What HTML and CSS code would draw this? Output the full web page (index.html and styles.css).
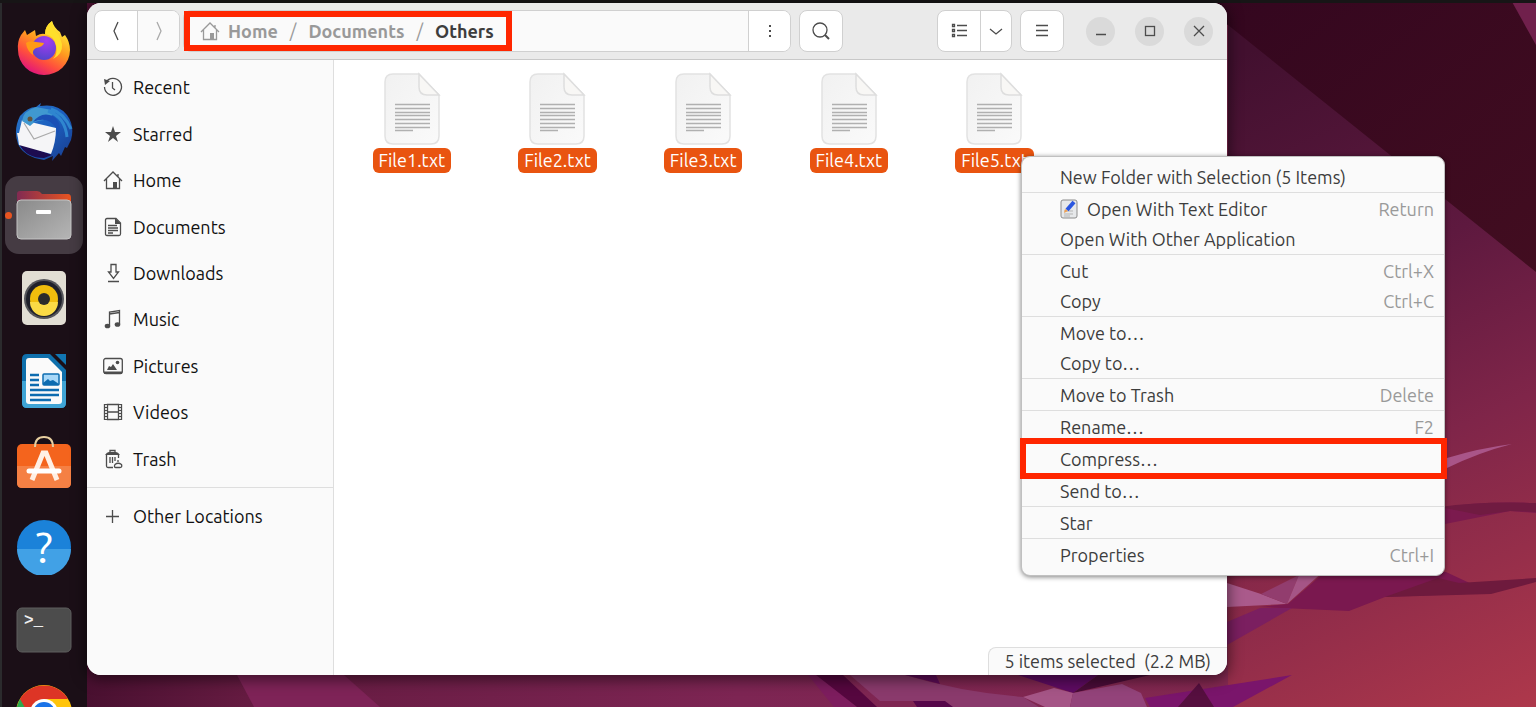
FILE: index.html
```html
<!DOCTYPE html>
<html lang="en">
<head>
    <meta charset="utf-8">
    <title>Others</title>
    <link rel="stylesheet" href="styles.css">
</head>
<body>
    <svg class="wallpaper" viewBox="0 0 1536 707" preserveAspectRatio="xMaxYMax slice" aria-hidden="true">
        <defs>
            <linearGradient id="base" gradientUnits="userSpaceOnUse" x1="1230" y1="60" x2="1536" y2="707">
                <stop offset="0" stop-color="#42102f"/>
                <stop offset="0.35" stop-color="#5e193f"/>
                <stop offset="0.6" stop-color="#7f2549"/>
                <stop offset="1" stop-color="#ae384b"/>
            </linearGradient>
            <linearGradient id="floor" x1="0" x2="1" y1="0" y2="0">
                <stop offset="0" stop-color="#3a0a27"/>
                <stop offset="0.2" stop-color="#651b41"/>
                <stop offset="0.6" stop-color="#7d2553"/>
                <stop offset="1" stop-color="#832850"/>
            </linearGradient>
            <linearGradient id="night" x1="0" x2="1" y1="0" y2="1">
                <stop offset="0" stop-color="#33061f"/>
                <stop offset="1" stop-color="#420d20"/>
            </linearGradient>
        </defs>
        <rect width="1536" height="707" fill="url(#base)"/>
        <rect width="1228" height="707" fill="url(#floor)"/>
        <path d="M1180 0H1536V272L1228 25Z" fill="url(#night)"/>
        <path d="M1511 0H1536V45Z" fill="#70204c"/>
        <path d="M237 675H344L380 707H254Z" fill="#7e2357"/>
        <path d="M808 675H818L857 707H834Z" fill="#7d1d5e"/>
        <path d="M816 675H843L877 707H857Z" fill="#56073f"/>
        <path d="M850 675H905Q960 692 1023 697L1039 707H950L940 701H880Z" fill="#8a3a6c"/>
        <path d="M905 675H936L940 684Z" fill="#5f0c58"/>
        <path d="M913 701H945L953 707H917Z" fill="#56074a"/>
        <path d="M1018 675H1098L1073 693Z" fill="#5e0b62"/>
        <path d="M1098 675H1150L1073 693Z" fill="#4a0c38"/>
        <path d="M1023 697 1054 688 1073 693 1070 707H1045Z" fill="#a55586"/>
        <path d="M1073 693 1122 684 1141 693 1147 707H1070Z" fill="#93437a"/>
        <path d="M1145 698 1292 675 1233 707H1150Z" fill="#7a156b"/>
        <path d="M1199 683 1214 707H1178Z" fill="#560f3f"/>
        <path d="M1447 458Q1480 448 1512 444 1480 452 1447 468Z" fill="#a95588"/>
        <path d="M1440 508Q1480 501 1536 503V513L1510 511 1440 525Z" fill="#7b1a4e"/>
        <path d="M1440 507Q1480 501 1536 503V512L1510 511 1480 515Z" fill="#701b41"/>
        <path d="M1227 583 1261 594 1287 604 1227 607Z" fill="#aa5a8b"/>
        <path d="M1261 594 1299 575 1287 604Z" fill="#923d6e"/>
        <path d="M1301 570H1325L1287 604Z" fill="#a55586"/>
        <path d="M1325 572H1446L1491 593 1385 597 1349 611 1259 607 1288 604Z" fill="#7a184f"/>
        <path d="M1385 597 1438 578 1459 583 1536 578V582L1491 594Z" fill="#6e1a3d"/>
        <path d="M1260 608H1292L1227 645V622Z" fill="#7b1f60"/>
    </svg>
    <div class="topbar"></div>

    <div class="screen">
        <nav class="dock" aria-label="Dock">
            <button class="dock-item" aria-label="Firefox">
                <svg width="54" height="56" viewBox="0 0 54 56">
                    <defs>
                        <linearGradient id="fox" x1="0.8" y1="0.1" x2="0.3" y2="1">
                            <stop offset="0" stop-color="#fff03a"/>
                            <stop offset="0.4" stop-color="#ff9a1f"/>
                            <stop offset="0.7" stop-color="#ff4f3d"/>
                            <stop offset="1" stop-color="#e0127f"/>
                        </linearGradient>
                        <radialGradient id="globe" cx="0.6" cy="0.2" r="0.9">
                            <stop offset="0" stop-color="#a63bf0"/>
                            <stop offset="1" stop-color="#4b45c8"/>
                        </radialGradient>
                    </defs>
                    <path d="M4 14 8 9 10 14 18 9 19 15Q24 12 28 13 28 5 35 0 37 7 43 11L45 16 48 14Q53 21 53 29A26 25 0 0 1 1 29Q0 21 4 14Z" fill="url(#fox)"/>
                    <circle cx="27" cy="27" r="12" fill="url(#globe)"/>
                    <path d="M28 13Q37 15 39 24 41 33 36 38 46 33 45 23L42 14 37 9 35 0Q28 5 28 13Z" fill="#ffdf2b"/>
                    <path d="M9 22Q12 19 19 21L27 22Q26 26 19 27 15 29 16 34 10 30 9 22Z" fill="#ff9b16"/>
                </svg>
            </button>
            <button class="dock-item" aria-label="Thunderbird">
                <svg width="60" height="60" viewBox="0 0 60 60">
                    <defs>
                        <linearGradient id="bird" x1="0" y1="0" x2="1" y2="1">
                            <stop offset="0" stop-color="#2878c8"/>
                            <stop offset="0.5" stop-color="#1c5fc0"/>
                            <stop offset="1" stop-color="#183b8c"/>
                        </linearGradient>
                    </defs>
                    <path d="M6 14Q14 5 22 5L27 1 26 4Q44 1 53 13 61 24 57 38L53 46 51 45 47 54 45 51 38 59 39 54 30 58Q10 55 4 42-1 28 6 14Z" fill="url(#bird)"/>
                    <path d="M5 42 14 44 38 53 30 56Q12 56 5 42Z" fill="#1d0c50"/>
                    <path d="M8 18 42 26Q42 40 37 52L5 43 4 36 3 31 5 31Z" fill="#f5f5f7"/>
                    <path d="M10 21 20 37 41 29" fill="none" stroke="#aaa" stroke-width="1.2"/>
                    <path d="M8 19Q9 9 22 5L43 9 33 18Q22 17 16 24Z" fill="#4098d0"/>
                    <path d="M19 20Q34 13 43 27V33Q50 22 39 14 27 9 19 20Z" fill="#1a4fb5"/>
                    <circle cx="16" cy="17" r="2.5" fill="#66543c"/>
                    <path d="M34 9Q51 15 53 35M37 7Q50 11 57 27" fill="none" stroke="#2f86cf" stroke-width="3"/>
                </svg>
            </button>
            <button class="dock-item active" aria-label="Files">
                <svg width="56" height="52" viewBox="0 0 56 52">
                    <defs>
                        <linearGradient id="tab" x1="0" x2="1" y1="0" y2="0">
                            <stop offset="0" stop-color="#812a52"/>
                            <stop offset="1" stop-color="#e95420"/>
                        </linearGradient>
                        <linearGradient id="grey" x1="0" x2="1" y1="0" y2="1">
                            <stop offset="0" stop-color="#8a8a8a"/>
                            <stop offset="1" stop-color="#b5b5b5"/>
                        </linearGradient>
                    </defs>
                    <path d="M1 20V5Q1 2 4 2H21Q24 2 26 5H52Q55 5 55 9V22Z" fill="url(#tab)"/>
                    <path d="M5 11H51Q55 11 55 15V46Q55 50 51 50H5Q1 50 1 46V15Q1 11 5 11Z" fill="url(#grey)" stroke="#c4c4c4"/>
                    <rect x="20" y="21" width="15" height="4" rx="1" fill="#fff"/>
                </svg>
            </button>
            <button class="dock-item" aria-label="Rhythmbox">
                <svg width="46" height="56" viewBox="0 0 46 56">
                    <rect x="1" y="1" width="44" height="54" rx="5" fill="#e2ded4"/>
                    <circle cx="23" cy="29" r="20" fill="#55555a"/>
                    <circle cx="23" cy="29" r="18" fill="#1f202b"/>
                    <circle cx="23" cy="29" r="14" fill="#f0bd0d"/>
                    <path d="M9 32A14 14 0 0 0 37 32Z" fill="#fada45"/>
                    <circle cx="23" cy="29" r="6" fill="#2b2b2b"/>
                </svg>
            </button>
            <button class="dock-item" aria-label="LibreOffice Writer">
                <svg width="46" height="56" viewBox="0 0 46 56">
                    <path d="M6 1H29L45 17V50Q45 55 40 55H6Q1 55 1 50V6Q1 1 6 1Z" fill="#0f70ac"/>
                    <path d="M1 28H45V50Q45 55 40 55H6Q1 55 1 50Z" fill="#3fa4d5"/>
                    <path d="M34 1H45V12Z" fill="#1176b2"/>
                    <path d="M8 5H27L41 19V48Q41 51 38 51H8Q5 51 5 48V8Q5 5 8 5Z" fill="#fafafa"/>
                    <path d="M9 22H18M9 27H18M9 32H18M9 37H38M9 42H38M9 47H30" stroke="#0d6cb0" stroke-width="2.4"/>
                    <rect x="22" y="21" width="16" height="11" rx="1" fill="#a8d8f8" stroke="#0d6cb0" stroke-width="1.5"/>
                    <path d="M22 32V30L27 26 29 28 32 27 38 31V32Z" fill="#0d6cb0"/>
                </svg>
            </button>
            <button class="dock-item" aria-label="Ubuntu Software">
                <svg width="56" height="56" viewBox="0 0 56 56">
                    <rect x="1" y="8" width="54" height="44" rx="5" fill="#f4641d"/>
                    <path d="M1 30H55V47Q55 52 50 52H6Q1 52 1 47Z" fill="#f58044"/>
                    <path d="M16 44 27 17H30L41 44" fill="none" stroke="#fff0e5" stroke-width="5"/>
                    <path d="M13 35H43" stroke="#fff" stroke-width="5" stroke-linecap="round"/>
                    <path d="M19 11Q19 1 28 1T37 11" fill="none" stroke="#e8cfa0" stroke-width="2"/>
                </svg>
            </button>
            <button class="dock-item" aria-label="Help">
                <svg width="56" height="56" viewBox="0 0 56 56">
                    <circle cx="28" cy="28" r="27" fill="#1b82d9"/>
                    <path d="M1 30A27 27 0 0 0 55 30Z" fill="#41a1e6"/>
                    <text class="help-mark" x="28" y="44" text-anchor="middle">?</text>
                </svg>
            </button>
            <button class="dock-item" aria-label="Terminal">
                <svg width="56" height="46" viewBox="0 0 56 46">
                    <rect x="1" y="1" width="54" height="44" rx="5" fill="#4c4c4c" stroke="#5e5e5e"/>
                    <text class="prompt" x="8" y="18">&gt;_</text>
                </svg>
            </button>
            <button class="dock-item" aria-label="Chrome">
                <svg width="58" height="58" viewBox="0 0 58 58">
                    <circle cx="29" cy="29" r="28" fill="#ffc40a"/>
                    <path d="M29 29 5 15A28 28 0 0 0 29 57L41 36Z" fill="#2da94f"/>
                    <path d="M5 15A28 28 0 0 1 53 15H29L17 36Z" fill="#dd3526"/>
                    <circle cx="29" cy="29" r="14" fill="#fff"/>
                    <circle cx="29" cy="29" r="11" fill="#1a73e8"/>
                </svg>
            </button>
        </nav>

        <main class="desktop">
            <div class="window">
                <header class="headerbar">
                    <div class="linked">
                        <button class="btn" aria-label="Back"><svg width="20" height="24" viewBox="0 0 20 24"><path d="M12 3 8 12 12 21"/></svg></button>
                        <button class="btn" aria-label="Forward" disabled><svg width="20" height="24" viewBox="0 0 20 24"><path d="M8 3 12 12 8 21"/></svg></button>
                    </div>
                    <div class="pathbar">
                        <nav class="crumbs" aria-label="Path">
                            <a href="#"><svg width="20" height="20" viewBox="0 0 20 20"><path d="M1 11 10 2 19 11M3.5 9V18.5H16.5V9M15 7V4"/><path class="solid" d="M10 12H14V18H10Z"/></svg>Home</a>
                            <span>/</span>
                            <a href="#">Documents</a>
                            <span>/</span>
                            <a href="#" class="current">Others</a>
                        </nav>
                        <button class="btn" aria-label="Folder menu"><svg width="20" height="20" viewBox="0 0 20 20"><path class="solid" d="M9 4H11V6H9ZM9 9H11V11H9ZM9 14H11V16H9Z"/></svg></button>
                    </div>
                    <button class="btn single" aria-label="Search"><svg width="20" height="20" viewBox="0 0 20 20"><circle cx="9" cy="9" r="7"/><path d="M14 14 18 18" stroke-width="2"/></svg></button>
                    <div class="spacer"></div>
                    <div class="linked">
                        <button class="btn" aria-label="List view"><svg width="20" height="20" viewBox="0 0 20 20"><path d="M8 4.5H18M8 9.5H18M8 14.5H18"/><path d="M3.5 3.5H5.5V5.5H3.5ZM3.5 8.5H5.5V10.5H3.5ZM3.5 13.5H5.5V15.5H3.5Z"/></svg></button>
                        <button class="btn narrow" aria-label="View options"><svg width="16" height="16" viewBox="0 0 16 16"><path d="M2 6 8 11 14 6"/></svg></button>
                    </div>
                    <button class="btn single" aria-label="Main menu"><svg width="20" height="20" viewBox="0 0 20 20"><path d="M4 4.5H16M4 9.5H16M4 14.5H16"/></svg></button>
                    <div class="controls">
                        <button aria-label="Minimize"><svg width="16" height="16" viewBox="0 0 16 16"><path d="M3 11.5H13"/></svg></button>
                        <button aria-label="Maximize"><svg width="16" height="16" viewBox="0 0 16 16"><rect x="3.5" y="3.5" width="9" height="9"/></svg></button>
                        <button aria-label="Close"><svg width="16" height="16" viewBox="0 0 16 16"><path d="M3 3 13 13M13 3 3 13"/></svg></button>
                    </div>
                </header>

                <div class="content">
                    <aside class="sidebar">
                        <ul class="places">
                            <li><a href="#"><svg width="20" height="20" viewBox="0 0 20 20"><path d="M3 5A8.5 8.5 0 1 1 1.5 10M9.5 5V11L12 13"/><path class="solid" d="M1 2 7 4 2 8Z"/></svg>Recent</a></li>
                            <li><a href="#"><svg width="20" height="20" viewBox="0 0 20 20"><path class="solid" d="M10 2 12 8H18L13 12 15 18 10 14 5 18 7 12 2 8H8Z"/></svg>Starred</a></li>
                            <li><a href="#"><svg width="20" height="20" viewBox="0 0 20 20"><path d="M1 11 10 2 19 11M3.5 9V18.5H16.5V9M15 7V4"/><path class="solid" d="M10 12H14V18H10Z"/></svg>Home</a></li>
                            <li><a href="#"><svg width="20" height="20" viewBox="0 0 20 20"><path d="M4 1.5H13L17.5 6V17Q17.5 18.5 16 18.5H4Q2.5 18.5 2.5 17V3Q2.5 1.5 4 1.5ZM5 8.5H14M5 11H15M5 13.5H15M5 16H10"/><path class="solid" d="M12 1V7H18Z"/></svg>Documents</a></li>
                            <li><a href="#"><svg width="20" height="20" viewBox="0 0 20 20"><path d="M8 1.5H13V9H15.5L10.5 15.5 5.5 9H8ZM5 18.5H16"/></svg>Downloads</a></li>
                            <li><a href="#"><svg width="20" height="20" viewBox="0 0 20 20"><path d="M6.5 16V3L16.5 1.5V15M6.5 5 16.5 3.5"/><ellipse class="solid" cx="4.5" cy="17" rx="2.8" ry="2.3"/><ellipse class="solid" cx="14.5" cy="15.5" rx="2.8" ry="2.3"/></svg>Music</a></li>
                            <li><a href="#"><svg width="20" height="20" viewBox="0 0 20 20"><rect x="0.7" y="2.5" width="18.6" height="15" rx="2"/><path class="solid" d="M1 15.5H19V18H1ZM4 14 6 10 8 11 10 8 14 14Z"/><circle class="solid" cx="14.5" cy="6.5" r="1.8"/></svg>Pictures</a></li>
                            <li><a href="#"><svg width="20" height="20" viewBox="0 0 20 20"><path d="M4.5 2.5H15.5V17.5H4.5ZM4.5 10H15.5"/><path d="M2.5 2V18M17.5 2V18" stroke-width="3" stroke-dasharray="1 2"/><path d="M1.5 2V18M18.5 2V18"/></svg>Videos</a></li>
                            <li><a href="#"><svg width="20" height="20" viewBox="0 0 20 20"><path d="M7 3V1.5H12V3M3.5 6V17Q3.5 18.5 5 18.5H10M15.5 6V9M7 8V14M9.5 8V14M12 8V12"/><path class="solid" d="M2 6Q4 3 6 3H13Q15 3 17 6Z"/><path d="M12 15.5Q15 13 18.5 15.5 19.5 18.5 17 18.5H13Q10.5 18.5 12 15.5ZM15 11V13"/></svg>Trash</a></li>
                        </ul>
                        <ul class="places other">
                            <li><a href="#"><svg width="20" height="20" viewBox="0 0 20 20"><path d="M3 10.5H16M9.5 4V17"/></svg>Other Locations</a></li>
                        </ul>
                    </aside>
                    <section class="view">
                        <ul class="files">
                            <li><svg width="58" height="74" viewBox="0 0 58 74"><use href="#paper"/></svg><span>File1.txt</span></li>
                            <li><svg width="58" height="74" viewBox="0 0 58 74"><use href="#paper"/></svg><span>File2.txt</span></li>
                            <li><svg width="58" height="74" viewBox="0 0 58 74"><use href="#paper"/></svg><span>File3.txt</span></li>
                            <li><svg width="58" height="74" viewBox="0 0 58 74"><use href="#paper"/></svg><span>File4.txt</span></li>
                            <li><svg width="58" height="74" viewBox="0 0 58 74"><use href="#paper"/></svg><span>File5.txt</span></li>
                        </ul>
                        <p class="status">5 items selected&nbsp; (2.2 MB)</p>
                    </section>
                </div>
            </div>

            <div class="menu" role="menu">
                <div class="group">
                    <button role="menuitem">New Folder with Selection (5 Items)</button>
                </div>
                <div class="group">
                    <button role="menuitem">
                        <svg width="18" height="20" viewBox="0 0 18 20"><rect x="1" y="1" width="16" height="18" rx="2" fill="#e6e8ea" stroke="#8c8c8c"/><path d="M4 15H13M4 12H13M4 17H10" stroke="#b5b5b5"/><path d="M7 11 14 3" stroke="#2a56e0" stroke-width="4"/><path d="M4 14 5 10 8 12Z" fill="#f0a050"/></svg>
                        Open With Text Editor<kbd>Return</kbd>
                    </button>
                    <button role="menuitem">Open With Other Application</button>
                </div>
                <div class="group">
                    <button role="menuitem">Cut<kbd>Ctrl+X</kbd></button>
                    <button role="menuitem">Copy<kbd>Ctrl+C</kbd></button>
                </div>
                <div class="group">
                    <button role="menuitem">Move to…</button>
                    <button role="menuitem">Copy to…</button>
                </div>
                <div class="group">
                    <button role="menuitem">Move to Trash<kbd>Delete</kbd></button>
                </div>
                <div class="group">
                    <button role="menuitem">Rename…<kbd>F2</kbd></button>
                </div>
                <div class="group">
                    <button role="menuitem" class="marked">Compress…</button>
                </div>
                <div class="group">
                    <button role="menuitem">Send to…</button>
                </div>
                <div class="group">
                    <button role="menuitem">Star</button>
                </div>
                <div class="group">
                    <button role="menuitem">Properties<kbd>Ctrl+I</kbd></button>
                </div>
            </div>
        </main>
    </div>

    <svg class="defs" width="0" height="0" aria-hidden="true">
        <defs>
            <linearGradient id="sheet" x1="0" x2="1" y1="0" y2="1">
                <stop offset="0" stop-color="#f1f1f1"/>
                <stop offset="1" stop-color="#fafafa"/>
            </linearGradient>
            <g id="paper">
                <path d="M10 2H36L56 23V64Q56 72 48 72H10Q2 72 2 64V10Q2 2 10 2Z" fill="url(#sheet)" stroke="#e2e2e2" stroke-width="1.5"/>
                <path d="M36 2V15Q36 23 44 23H56Z" fill="#f8f7f5" stroke="#dedede" stroke-width="1.5"/>
                <path d="M12 32.5H47M12 36.5H47M12 40.5H47M12 43.5H47M12 47.5H47M12 51.5H47M12 55.5H47M12 58.5H30" stroke="#b0b0b0" stroke-width="1.3"/>
            </g>
        </defs>
    </svg>
</body>
</html>
```
FILE: styles.css
```css
* {
    box-sizing: border-box;
}

body {
    margin: 0;
    height: 100vh;
    overflow: hidden;
    display: flex;
    flex-direction: column;
    background: #5e193f;
    font-family: "Ubuntu", "Noto Sans", sans-serif;
    font-size: 18px;
    line-height: 24px;
    color: #111;
}

ul {
    list-style: none;
    margin: 0;
    padding: 0;
}

a {
    color: inherit;
    text-decoration: none;
}

button {
    font: inherit;
    color: inherit;
    border: none;
    background: none;
    padding: 0;
    cursor: pointer;
}

svg {
    flex: none;
}

.wallpaper {
    position: absolute;
    inset: 0;
    width: 100%;
    height: 100%;
    z-index: -1;
}

.defs {
    position: absolute;
}

.topbar {
    height: 3px;
    flex: none;
    background: #171516;
}

.screen {
    flex: 1;
    display: flex;
    min-height: 0;
}

/* dock */
.dock {
    width: 87px;
    flex: none;
    display: flex;
    flex-direction: column;
    align-items: center;
    gap: 5px;
    padding: 7px 2px 0 0;
    background: #1b0f17;
    border-left: 2px solid #2b2b2d;
    overflow: hidden;
}

.dock-item {
    width: 78px;
    height: 78px;
    flex: none;
    display: flex;
    align-items: center;
    justify-content: center;
    position: relative;
    border-radius: 14px;
}

.dock-item.active {
    background: #453b43;
}

.dock-item.active::before {
    content: "";
    position: absolute;
    left: 0;
    width: 7px;
    height: 7px;
    border-radius: 50%;
    background: #e95420;
}

.help-mark {
    font-family: "Ubuntu", "Noto Sans", sans-serif;
    font-size: 44px;
    fill: #fff;
}

.prompt {
    font-family: "Liberation Mono", monospace;
    font-size: 16px;
    font-weight: bold;
    fill: #eee;
}

/* file manager window */
.desktop {
    flex: 1;
    display: flex;
    position: relative;
    padding: 0 309px 32px 0;
}

.window {
    flex: 1;
    display: flex;
    flex-direction: column;
    min-width: 0;
    overflow: hidden;
    border-radius: 14px;
    background: #fff;
    box-shadow: 0 3px 14px 2px rgba(0, 0, 0, 0.5);
}

.headerbar {
    height: 57px;
    flex: none;
    display: flex;
    align-items: center;
    padding: 0 14px 0 7px;
    background: #eaeaea;
    border-bottom: 1px solid #c8c8c8;
}

.headerbar svg,
.places svg {
    fill: none;
    stroke: #4c4c4c;
    stroke-width: 1.3;
}

.headerbar svg .solid,
.places svg .solid {
    fill: #4c4c4c;
    stroke: none;
}

.linked,
.pathbar,
.single {
    height: 42px;
    border: 1px solid #d0d0d0;
    border-radius: 8px;
    background: #fff;
}

.linked,
.pathbar {
    display: flex;
}

.linked {
    overflow: hidden;
}

.btn {
    width: 42px;
    display: flex;
    align-items: center;
    justify-content: center;
}

.btn + .btn {
    border-left: 1px solid #d0d0d0;
}

.btn:disabled {
    background: #fafafa;
}

.btn:disabled svg {
    stroke: #aaa;
}

.btn.single {
    width: 44px;
    margin-left: 8px;
}

.btn.narrow {
    width: 31px;
}

.pathbar {
    width: 608px;
    margin-left: 3px;
    justify-content: space-between;
    background: #fafafa;
}

.pathbar .btn {
    background: #fff;
    border-left: 1px solid #d0d0d0;
    border-radius: 0 7px 7px 0;
}

.crumbs {
    display: flex;
    align-items: center;
    gap: 12px;
    padding: 0 12px 0 10px;
    border: 6px solid #ff2600;
    font-weight: bold;
    color: #999;
}

.crumbs a {
    display: flex;
    align-items: center;
    gap: 8px;
}

.crumbs svg {
    stroke: #999;
}

.headerbar .crumbs .solid {
    fill: #999;
}

.crumbs span {
    font-weight: normal;
}

.crumbs .current {
    color: #3d3d3d;
}

.spacer {
    flex: 1;
}

.controls {
    display: flex;
    gap: 20px;
    margin-left: 22px;
}

.controls button {
    width: 29px;
    height: 29px;
    display: flex;
    align-items: center;
    justify-content: center;
    border-radius: 50%;
    background: #dadada;
}

.content {
    flex: 1;
    display: flex;
    min-height: 0;
}

.sidebar {
    width: 247px;
    flex: none;
    background: #fafafa;
    border-right: 1px solid #dedede;
}

.places {
    display: grid;
    grid-auto-rows: 1fr;
    height: 427px;
    padding: 4px 0 5px;
}

.places.other {
    height: 57px;
    border-top: 1px solid #dedede;
}

.places a {
    height: 100%;
    display: flex;
    align-items: center;
    gap: 10px;
    padding-left: 16px;
}

.view {
    flex: 1;
    display: flex;
    flex-direction: column;
    justify-content: space-between;
    min-width: 0;
}

.files {
    display: grid;
    grid-template-columns: repeat(auto-fill, minmax(140px, 1fr));
    padding: 12px 14px 0 5px;
}

.files li {
    display: flex;
    flex-direction: column;
    align-items: center;
    gap: 2px;
}

.files span {
    padding: 0 6px 1px;
    border-radius: 6px;
    background: #e95410;
    color: #fff;
}

.status {
    align-self: flex-end;
    margin: 0;
    padding: 1px 16px 2px 15px;
    background: #fafafa;
    border: 1px solid #dedede;
    border-width: 1px 0 0 1px;
    border-radius: 8px 0 0 0;
    color: #3d3d3d;
}

/* context menu */
.menu {
    position: absolute;
    top: 153px;
    right: 91px;
    width: 424px;
    padding: 5px 0;
    border: 1px solid #c0c0c0;
    border-radius: 9px;
    background: #fafafa;
    box-shadow: 0 1px 5px rgba(0, 0, 0, 0.5);
    color: #3d3d3d;
}

.group + .group {
    border-top: 1px solid #dedede;
    padding-top: 1px;
}

.menu button {
    width: 100%;
    height: 30px;
    display: flex;
    align-items: center;
    gap: 9px;
    padding: 0 10px 0 38px;
    text-align: left;
}

.menu kbd {
    margin-left: auto;
    font: inherit;
    color: #999;
}

.menu .marked {
    position: relative;
}

.marked::after {
    content: "";
    position: absolute;
    inset: -6px -3px -5px -2px;
    border: 6px solid #ff2600;
}
```
